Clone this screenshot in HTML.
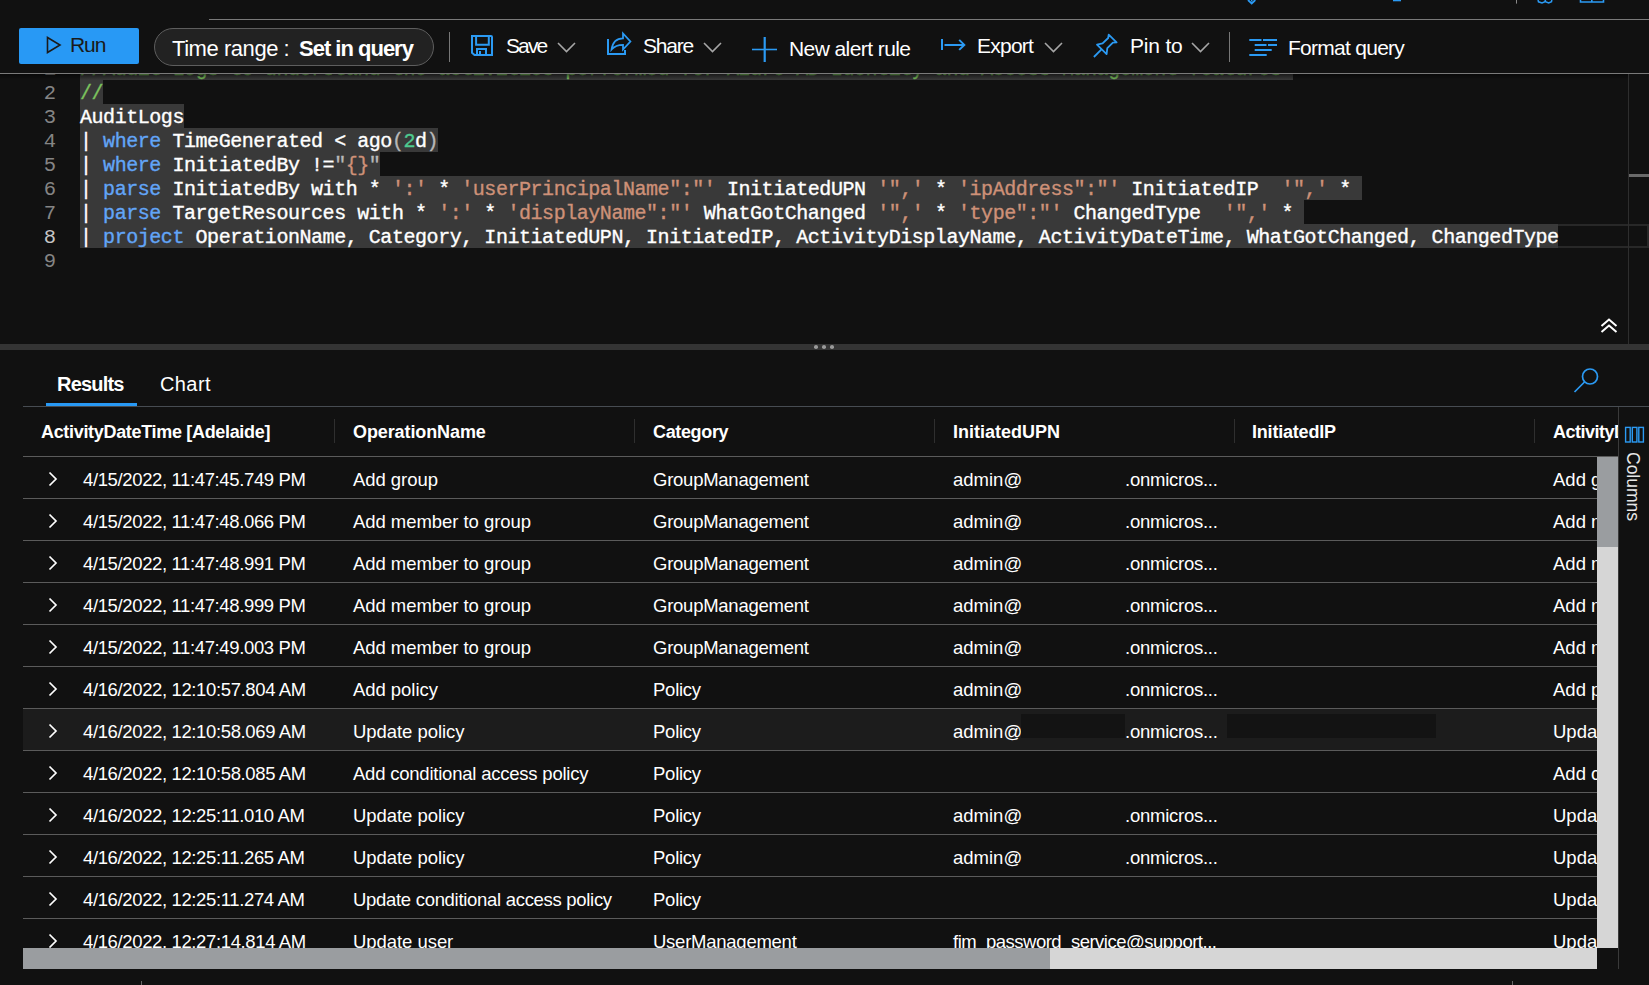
<!DOCTYPE html>
<html><head><meta charset="utf-8">
<style>
*{margin:0;padding:0;box-sizing:border-box}
html,body{width:1649px;height:985px;overflow:hidden;background:#111111;font-family:"Liberation Sans",sans-serif;color:#fff}
.a{position:absolute;white-space:pre}
#tb{position:absolute;left:0;top:0;width:1649px;height:74px;background:#111}
.tbt{position:absolute;font-size:21px;color:#fff;line-height:1;white-space:pre}
.sep{position:absolute;width:1px;background:#777}
#ed{position:absolute;left:0;top:74px;width:1649px;height:270px;overflow:hidden;background:#111}
.ln{position:absolute;left:0;width:56px;text-align:right;font-family:"Liberation Mono",monospace;font-size:20.5px;line-height:24px;color:#858585;margin-top:2px}
.cl{position:absolute;left:80px;height:24px;font-family:"Liberation Mono",monospace;font-size:20px;letter-spacing:-0.45px;line-height:24px;color:#fff;white-space:pre;margin-top:2px;-webkit-text-stroke:0.35px currentColor}
.sel{position:absolute;left:80px;height:24px;background:#393939}
.k{color:#62a5f7}.s{color:#ce9178}.c{color:#7cc35e}.n{color:#4ec98f}.g{color:#b8b8b8}

.row{position:absolute;left:0;width:1574px;height:42px}
.row::after{content:"";position:absolute;left:0;top:42px;width:1574px;height:1px;background:#5b5b5b;z-index:2}
.hov{background:#1c1c1c}
.chev{position:absolute;left:25px;top:15px}
.td{position:absolute;top:14px;font-size:18.5px;line-height:20px;white-space:pre;color:#fff}
.th{position:absolute;top:15px;font-size:18px;line-height:20px;white-space:pre;color:#fff;font-weight:bold}
.csep{position:absolute;top:12px;width:1px;height:24px;background:#2f2f2f}
.redact{position:absolute;top:6px;height:24px;background:#131313}
</style></head><body>

<!-- top strip -->
<div class="a" style="left:209px;top:19px;width:1440px;height:1px;background:#7a7a7a"></div>
<!-- top fragments -->
<svg class="a" style="left:1240px;top:0" width="409" height="6" viewBox="0 0 409 6"><path d="M8 0 L11.7 3.5 L15.3 0" fill="none" stroke="#2b9af3" stroke-width="1.8"/><path d="M11.7 0 V1.5" stroke="#2b9af3" stroke-width="1.5"/><rect x="153" y="0" width="8" height="1.3" fill="#2b9af3"/><rect x="276" y="0" width="1" height="3.6" fill="#8a8a8a"/><path d="M298 0 L298.5 1.8 L302 3 L305 1.8 L305.3 0 M305.3 0 L305.5 1.8 L308.7 3 L311.5 1.8 L311.8 0" fill="none" stroke="#2b9af3" stroke-width="1.5"/><path d="M340.5 0 V2 H363.5 V0 M351.8 0 V2" fill="none" stroke="#2b9af3" stroke-width="1.6"/></svg>
<!-- toolbar -->
<div class="a" style="left:19px;top:28px;width:120px;height:36px;background:#2899f5;border-radius:2px"></div>
<svg class="a" style="left:46px;top:36px" width="16" height="18" viewBox="0 0 16 18"><path d="M1.5 1.5 L14 9 L1.5 16.5 Z" fill="none" stroke="#1b1b1b" stroke-width="1.6" stroke-linejoin="miter"/></svg>
<div class="tbt" style="left:70px;top:34px;color:#1a1a1a;letter-spacing:-1.1px">Run</div>

<div class="a" style="left:154px;top:28px;width:280px;height:38px;border:1px solid #5e5e5e;border-radius:19px;background:#222"></div>
<div class="tbt" style="left:172px;top:38px;font-size:22px;letter-spacing:-0.45px">Time range :</div><div class="tbt" style="left:299px;top:38px;font-size:22px;letter-spacing:-1px;font-weight:bold">Set in query</div>
<div class="sep" style="left:449px;top:32px;height:30px"></div>

<!-- Save -->
<svg class="a" style="left:471px;top:35px" width="23" height="22" viewBox="0 0 23 22"><path d="M1 1 H20 Q21 1 21 2 V20 H3.5 L1 17.8 Z" fill="none" stroke="#2b9af3" stroke-width="2"/><path d="M5.1 1 V9.7 H17.8 V1" fill="none" stroke="#2b9af3" stroke-width="2"/><path d="M6 20 V14 H15 V20" fill="none" stroke="#2b9af3" stroke-width="2"/><rect x="8" y="16" width="2" height="3.5" fill="#2b9af3"/></svg>
<div class="tbt" style="left:506px;top:35px;letter-spacing:-1.9px">Save</div>
<svg class="a" style="left:557px;top:42px" width="19" height="11" viewBox="0 0 19 11"><path d="M1 1 L9.5 9.5 L18 1" fill="none" stroke="#a6a6a6" stroke-width="1.6"/></svg>

<!-- Share -->
<svg class="a" style="left:602px;top:28px" width="32" height="32" viewBox="0 0 32 32"><path d="M6 11 V26 H23 V22" fill="none" stroke="#2b9af3" stroke-width="2"/><path d="M9.6 21.4 C10.6 14 15 10.3 21 10.3 V5.5 L28.4 13.5 L21 21.5 V16.8 C16 16.8 12.6 18 9.6 21.4 Z" fill="none" stroke="#2b9af3" stroke-width="1.8" stroke-linejoin="miter"/></svg>
<div class="tbt" style="left:643px;top:35px;letter-spacing:-1.2px">Share</div>
<svg class="a" style="left:703px;top:42px" width="19" height="11" viewBox="0 0 19 11"><path d="M1 1 L9.5 9.5 L18 1" fill="none" stroke="#a6a6a6" stroke-width="1.6"/></svg>

<!-- New alert rule -->
<svg class="a" style="left:745px;top:32px" width="40" height="36" viewBox="0 0 40 36"><path d="M19.7 5 V30" stroke="#2b9af3" stroke-width="2.2"/><path d="M7 17.5 H32" stroke="#2b9af3" stroke-width="1.6"/></svg>
<div class="tbt" style="left:789px;top:38px;letter-spacing:-0.58px">New alert rule</div>

<!-- Export -->
<svg class="a" style="left:936px;top:32px" width="34" height="26" viewBox="0 0 34 26"><path d="M6 7 V18" stroke="#2b9af3" stroke-width="2"/><path d="M8.5 12.9 H28 M23.2 7.9 L28.3 12.9 L23.2 17.9" fill="none" stroke="#2b9af3" stroke-width="2"/></svg>
<div class="tbt" style="left:977px;top:35px;letter-spacing:-0.76px">Export</div>
<svg class="a" style="left:1044px;top:42px" width="19" height="11" viewBox="0 0 19 11"><path d="M1 1 L9.5 9.5 L18 1" fill="none" stroke="#a6a6a6" stroke-width="1.6"/></svg>

<!-- Pin to -->
<svg class="a" style="left:1088px;top:28px" width="34" height="34" viewBox="0 0 34 34"><path d="M5.9 29 L13.5 21.4" stroke="#2b9af3" stroke-width="1.8"/><path d="M20.7 6.7 L28.6 14.3 L24.9 14.6 L19.3 20.1 L18.6 26.2 L9 16.6 L14.6 15.3 L20.2 10 Z" fill="none" stroke="#2b9af3" stroke-width="1.8" stroke-linejoin="round"/></svg>
<div class="tbt" style="left:1130px;top:35px;letter-spacing:-0.18px">Pin to</div>
<svg class="a" style="left:1191px;top:42px" width="19" height="11" viewBox="0 0 19 11"><path d="M1 1 L9.5 9.5 L18 1" fill="none" stroke="#a6a6a6" stroke-width="1.6"/></svg>
<div class="sep" style="left:1229px;top:32px;height:30px"></div>

<!-- Format query -->
<svg class="a" style="left:1249px;top:39px" width="29" height="17" viewBox="0 0 29 17"><path d="M0.3 1 H12.5 M14 1 H28 M5.7 6 H17.5 M19 6 H28 M5.7 11 H22.7 M0.3 16 H17.7" stroke="#2b9af3" stroke-width="2"/></svg>
<div class="tbt" style="left:1288px;top:37px;letter-spacing:-0.73px">Format query</div>

<!-- toolbar bottom line -->
<div class="a" style="left:0;top:73px;width:1649px;height:1px;background:#7a7a7a"></div>

<!-- editor -->
<div id="ed">
<div class="a" style="left:80px;top:150px;width:1569px;height:24px;border:2px solid #282828"></div>
<div class="sel" style="top:-18px;width:1212.8px"></div>
<div class="ln" style="top:-18px">1</div>
<div class="cl" style="top:-18px"><span class="c">//Audit Logs to understand the activities performed for Azure AD Identity and Access Management features</span></div>
<div class="sel" style="top:6px;width:23.1px"></div>
<div class="ln" style="top:6px">2</div>
<div class="cl" style="top:6px"><span class="c">//</span></div>
<div class="sel" style="top:30px;width:104.0px"></div>
<div class="ln" style="top:30px">3</div>
<div class="cl" style="top:30px">AuditLogs</div>
<div class="sel" style="top:54px;width:358.1px"></div>
<div class="ln" style="top:54px">4</div>
<div class="cl" style="top:54px">| <span class="k">where</span> TimeGenerated &lt; ago<span class="g">(</span><span class="n">2</span>d<span class="g">)</span></div>
<div class="sel" style="top:78px;width:300.3px"></div>
<div class="ln" style="top:78px">5</div>
<div class="cl" style="top:78px">| <span class="k">where</span> InitiatedBy !=<span class="g">&quot;</span><span class="s">{}</span><span class="g">&quot;</span></div>
<div class="sel" style="top:102px;width:1282.1px"></div>
<div class="ln" style="top:102px">6</div>
<div class="cl" style="top:102px">| <span class="k">parse</span> InitiatedBy with * <span class="s">&#x27;:&#x27;</span> * <span class="s">&#x27;userPrincipalName&quot;:&quot;&#x27;</span> InitiatedUPN <span class="s">&#x27;&quot;,&#x27;</span> * <span class="s">&#x27;ipAddress&quot;:&quot;&#x27;</span> InitiatedIP  <span class="s">&#x27;&quot;,&#x27;</span> * </div>
<div class="sel" style="top:126px;width:1224.3px"></div>
<div class="ln" style="top:126px">7</div>
<div class="cl" style="top:126px">| <span class="k">parse</span> TargetResources with * <span class="s">&#x27;:&#x27;</span> * <span class="s">&#x27;displayName&quot;:&quot;&#x27;</span> WhatGotChanged <span class="s">&#x27;&quot;,&#x27;</span> * <span class="s">&#x27;type&quot;:&quot;&#x27;</span> ChangedType  <span class="s">&#x27;&quot;,&#x27;</span> * </div>
<div class="sel" style="top:150px;width:1478.4px"></div>
<div class="ln" style="top:150px;color:#c6c6c6">8</div>
<div class="cl" style="top:150px">| <span class="k">project</span> OperationName, Category, InitiatedUPN, InitiatedIP, ActivityDisplayName, ActivityDateTime, WhatGotChanged, ChangedType</div>
<div class="ln" style="top:174px">9</div>
<div class="cl" style="top:174px"></div>
</div>


<div class="a" style="left:0;top:74px;width:1628px;height:6px;background:linear-gradient(rgba(0,0,0,0.55),rgba(0,0,0,0))"></div>
<!-- editor right ruler -->
<div class="a" style="left:1628px;top:74px;width:1px;height:270px;background:#2e2e2e"></div>
<div class="a" style="left:1629px;top:174px;width:20px;height:3px;background:#6a6a6a"></div>
<svg class="a" style="left:1600px;top:318px" width="18" height="15" viewBox="0 0 18 15"><path d="M1.5 8 L9 1.5 L16.5 8 M1.5 14 L9 7.5 L16.5 14" fill="none" stroke="#fff" stroke-width="2"/></svg>

<!-- splitter -->
<div class="a" style="left:0;top:344px;width:1649px;height:6px;background:#343434"></div>
<div class="a" style="left:814px;top:345px;width:4px;height:3.6px;background:#9a9a9a;border-radius:50%"></div>
<div class="a" style="left:822px;top:345px;width:4px;height:3.6px;background:#9a9a9a;border-radius:50%"></div>
<div class="a" style="left:830px;top:345px;width:4px;height:3.6px;background:#9a9a9a;border-radius:50%"></div>

<!-- tabs -->
<div class="a" style="left:57px;top:373px;font-size:20px;line-height:22px;font-weight:bold;letter-spacing:-0.8px">Results</div>
<div class="a" style="left:160px;top:373px;font-size:20px;line-height:22px;letter-spacing:0.4px">Chart</div>
<div class="a" style="left:46px;top:403px;width:91px;height:3px;background:#2899f5"></div>
<div class="a" style="left:23px;top:406px;width:1626px;height:1px;background:#474c52"></div>
<svg class="a" style="left:1572px;top:366px" width="28" height="28" viewBox="0 0 28 28"><circle cx="18" cy="10.5" r="7.5" fill="none" stroke="#2b9af3" stroke-width="1.7"/><path d="M12.5 16 L2.5 26" stroke="#2b9af3" stroke-width="1.7"/></svg>

<!-- right columns panel -->
<div class="a" style="left:1618px;top:407px;width:1px;height:562px;background:#3a3a3a"></div>
<svg class="a" style="left:1624px;top:426px" width="21" height="17" viewBox="0 0 21 17"><rect x="1.6" y="1.4" width="4.6" height="14.6" fill="none" stroke="#2b9af3" stroke-width="1.4"/><rect x="8.3" y="1.4" width="4.6" height="14.6" fill="none" stroke="#2b9af3" stroke-width="1.4"/><rect x="14.8" y="1.4" width="4.6" height="14.6" fill="none" stroke="#2b9af3" stroke-width="1.4"/></svg>
<div class="a" style="left:1623px;top:452px;width:70px;height:20px;font-size:17.5px;line-height:20px;color:#e8e8e8;transform-origin:0 0;transform:translate(20px,0) rotate(90deg)">Columns</div>

<!-- header -->
<div id="hd" style="position:absolute;left:23px;top:407px;width:1595px;height:49px;overflow:hidden">
<div class="th" style="left:18px;letter-spacing:-0.32px">ActivityDateTime [Adelaide]</div>
<div class="csep" style="left:311px"></div><div class="th" style="left:330px;letter-spacing:-0.1px">OperationName</div>
<div class="csep" style="left:611px"></div><div class="th" style="left:630px;letter-spacing:-0.35px">Category</div>
<div class="csep" style="left:911px"></div><div class="th" style="left:930px">InitiatedUPN</div>
<div class="csep" style="left:1211px"></div><div class="th" style="left:1229px;letter-spacing:-0.2px">InitiatedIP</div>
<div class="csep" style="left:1511px"></div><div class="th" style="left:1530px;letter-spacing:-0.5px">ActivityDisplayName</div>
</div>
<div class="a" style="left:23px;top:456px;width:1595px;height:1px;background:#5b5b5b"></div>

<!-- rows -->
<div id="rb" style="position:absolute;left:23px;top:456px;width:1574px;height:492px;overflow:hidden">
<div class="row" style="top:0px">
<svg class="chev" width="10" height="16" viewBox="0 0 10 16"><path d="M1.5 1.5 L8 8 L1.5 14.5" fill="none" stroke="#fff" stroke-width="1.7"/></svg>
<div class="td" style="left:60px;letter-spacing:-0.37px">4/15/2022, 11:47:45.749 PM</div>
<div class="td" style="left:330px;letter-spacing:-0.05px">Add group</div>
<div class="td" style="left:630px;letter-spacing:-0.25px">GroupManagement</div>
<div class="td" style="left:930px">admin@</div><div class="td" style="left:1102px;letter-spacing:-0.25px">.onmicros...</div>
<div class="td" style="left:1530px">Add group</div>
</div>
<div class="row" style="top:42px">
<svg class="chev" width="10" height="16" viewBox="0 0 10 16"><path d="M1.5 1.5 L8 8 L1.5 14.5" fill="none" stroke="#fff" stroke-width="1.7"/></svg>
<div class="td" style="left:60px;letter-spacing:-0.37px">4/15/2022, 11:47:48.066 PM</div>
<div class="td" style="left:330px;letter-spacing:-0.05px">Add member to group</div>
<div class="td" style="left:630px;letter-spacing:-0.25px">GroupManagement</div>
<div class="td" style="left:930px">admin@</div><div class="td" style="left:1102px;letter-spacing:-0.25px">.onmicros...</div>
<div class="td" style="left:1530px">Add member to group</div>
</div>
<div class="row" style="top:84px">
<svg class="chev" width="10" height="16" viewBox="0 0 10 16"><path d="M1.5 1.5 L8 8 L1.5 14.5" fill="none" stroke="#fff" stroke-width="1.7"/></svg>
<div class="td" style="left:60px;letter-spacing:-0.37px">4/15/2022, 11:47:48.991 PM</div>
<div class="td" style="left:330px;letter-spacing:-0.05px">Add member to group</div>
<div class="td" style="left:630px;letter-spacing:-0.25px">GroupManagement</div>
<div class="td" style="left:930px">admin@</div><div class="td" style="left:1102px;letter-spacing:-0.25px">.onmicros...</div>
<div class="td" style="left:1530px">Add member to group</div>
</div>
<div class="row" style="top:126px">
<svg class="chev" width="10" height="16" viewBox="0 0 10 16"><path d="M1.5 1.5 L8 8 L1.5 14.5" fill="none" stroke="#fff" stroke-width="1.7"/></svg>
<div class="td" style="left:60px;letter-spacing:-0.37px">4/15/2022, 11:47:48.999 PM</div>
<div class="td" style="left:330px;letter-spacing:-0.05px">Add member to group</div>
<div class="td" style="left:630px;letter-spacing:-0.25px">GroupManagement</div>
<div class="td" style="left:930px">admin@</div><div class="td" style="left:1102px;letter-spacing:-0.25px">.onmicros...</div>
<div class="td" style="left:1530px">Add member to group</div>
</div>
<div class="row" style="top:168px">
<svg class="chev" width="10" height="16" viewBox="0 0 10 16"><path d="M1.5 1.5 L8 8 L1.5 14.5" fill="none" stroke="#fff" stroke-width="1.7"/></svg>
<div class="td" style="left:60px;letter-spacing:-0.37px">4/15/2022, 11:47:49.003 PM</div>
<div class="td" style="left:330px;letter-spacing:-0.05px">Add member to group</div>
<div class="td" style="left:630px;letter-spacing:-0.25px">GroupManagement</div>
<div class="td" style="left:930px">admin@</div><div class="td" style="left:1102px;letter-spacing:-0.25px">.onmicros...</div>
<div class="td" style="left:1530px">Add member to group</div>
</div>
<div class="row" style="top:210px">
<svg class="chev" width="10" height="16" viewBox="0 0 10 16"><path d="M1.5 1.5 L8 8 L1.5 14.5" fill="none" stroke="#fff" stroke-width="1.7"/></svg>
<div class="td" style="left:60px;letter-spacing:-0.37px">4/16/2022, 12:10:57.804 AM</div>
<div class="td" style="left:330px;letter-spacing:-0.05px">Add policy</div>
<div class="td" style="left:630px;letter-spacing:-0.25px">Policy</div>
<div class="td" style="left:930px">admin@</div><div class="td" style="left:1102px;letter-spacing:-0.25px">.onmicros...</div>
<div class="td" style="left:1530px">Add policy</div>
</div>
<div class="row hov" style="top:252px">
<svg class="chev" width="10" height="16" viewBox="0 0 10 16"><path d="M1.5 1.5 L8 8 L1.5 14.5" fill="none" stroke="#fff" stroke-width="1.7"/></svg>
<div class="td" style="left:60px;letter-spacing:-0.37px">4/16/2022, 12:10:58.069 AM</div>
<div class="td" style="left:330px;letter-spacing:-0.05px">Update policy</div>
<div class="td" style="left:630px;letter-spacing:-0.25px">Policy</div>
<div class="td" style="left:930px">admin@</div><div class="td" style="left:1102px;letter-spacing:-0.25px">.onmicros...</div>
<div class="redact" style="left:998px;width:104px"></div><div class="redact" style="left:1204px;width:209px"></div>
<div class="td" style="left:1530px">Update policy</div>
</div>
<div class="row" style="top:294px">
<svg class="chev" width="10" height="16" viewBox="0 0 10 16"><path d="M1.5 1.5 L8 8 L1.5 14.5" fill="none" stroke="#fff" stroke-width="1.7"/></svg>
<div class="td" style="left:60px;letter-spacing:-0.37px">4/16/2022, 12:10:58.085 AM</div>
<div class="td" style="left:330px;letter-spacing:-0.22px">Add conditional access policy</div>
<div class="td" style="left:630px;letter-spacing:-0.25px">Policy</div>
<div class="td" style="left:1530px">Add conditional access policy</div>
</div>
<div class="row" style="top:336px">
<svg class="chev" width="10" height="16" viewBox="0 0 10 16"><path d="M1.5 1.5 L8 8 L1.5 14.5" fill="none" stroke="#fff" stroke-width="1.7"/></svg>
<div class="td" style="left:60px;letter-spacing:-0.37px">4/16/2022, 12:25:11.010 AM</div>
<div class="td" style="left:330px;letter-spacing:-0.05px">Update policy</div>
<div class="td" style="left:630px;letter-spacing:-0.25px">Policy</div>
<div class="td" style="left:930px">admin@</div><div class="td" style="left:1102px;letter-spacing:-0.25px">.onmicros...</div>
<div class="td" style="left:1530px">Update policy</div>
</div>
<div class="row" style="top:378px">
<svg class="chev" width="10" height="16" viewBox="0 0 10 16"><path d="M1.5 1.5 L8 8 L1.5 14.5" fill="none" stroke="#fff" stroke-width="1.7"/></svg>
<div class="td" style="left:60px;letter-spacing:-0.37px">4/16/2022, 12:25:11.265 AM</div>
<div class="td" style="left:330px;letter-spacing:-0.05px">Update policy</div>
<div class="td" style="left:630px;letter-spacing:-0.25px">Policy</div>
<div class="td" style="left:930px">admin@</div><div class="td" style="left:1102px;letter-spacing:-0.25px">.onmicros...</div>
<div class="td" style="left:1530px">Update policy</div>
</div>
<div class="row" style="top:420px">
<svg class="chev" width="10" height="16" viewBox="0 0 10 16"><path d="M1.5 1.5 L8 8 L1.5 14.5" fill="none" stroke="#fff" stroke-width="1.7"/></svg>
<div class="td" style="left:60px;letter-spacing:-0.37px">4/16/2022, 12:25:11.274 AM</div>
<div class="td" style="left:330px;letter-spacing:-0.3px">Update conditional access policy</div>
<div class="td" style="left:630px;letter-spacing:-0.25px">Policy</div>
<div class="td" style="left:1530px">Update conditional access policy</div>
</div>
<div class="row" style="top:462px">
<svg class="chev" width="10" height="16" viewBox="0 0 10 16"><path d="M1.5 1.5 L8 8 L1.5 14.5" fill="none" stroke="#fff" stroke-width="1.7"/></svg>
<div class="td" style="left:60px;letter-spacing:-0.37px">4/16/2022, 12:27:14.814 AM</div>
<div class="td" style="left:330px;letter-spacing:-0.05px">Update user</div>
<div class="td" style="left:630px;letter-spacing:-0.25px">UserManagement</div>
<div class="td" style="left:930px;letter-spacing:-0.5px">fim_password_service@support...</div>
<div class="td" style="left:1530px">Update user</div>
</div>
</div>

<!-- vertical scrollbar -->
<div class="a" style="left:1597px;top:457px;width:21px;height:491px;background:#d6d6d6"></div>
<div class="a" style="left:1597px;top:457px;width:21px;height:90px;background:#9a9da0"></div>
<!-- horizontal scrollbar -->
<div class="a" style="left:23px;top:948px;width:1574px;height:21px;background:#d6d6d6"></div>
<div class="a" style="left:23px;top:948px;width:1027px;height:21px;background:#9a9da0"></div>
<div class="a" style="left:1597px;top:948px;width:21px;height:21px;background:#111"></div>
<div class="a" style="left:141px;top:981px;width:1px;height:4px;background:#666"></div>
<div class="a" style="left:1512px;top:981px;width:1px;height:4px;background:#666"></div>
</body></html>
